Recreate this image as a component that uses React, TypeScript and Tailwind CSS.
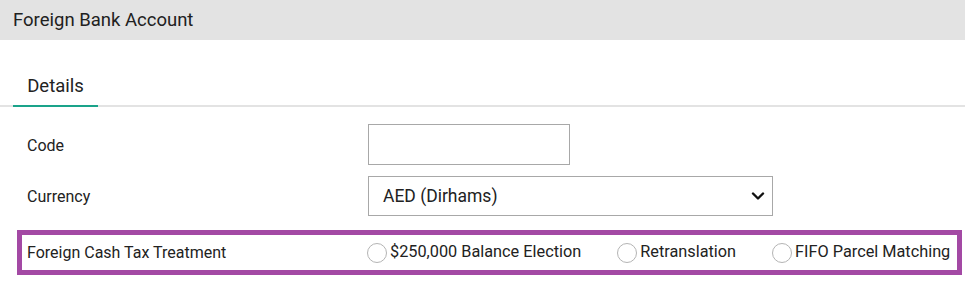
import { useState } from 'react';

const font = { fontFamily: 'Roboto, "Liberation Sans", sans-serif' };

function Radio({ label, checked, onSelect }: { label: string; checked: boolean; onSelect: () => void }) {
  return (
    <label className="flex items-center cursor-pointer" onClick={onSelect}>
      <span className="w-[20px] h-[20px] rounded-full border border-[#b4b4b4] bg-white flex items-center justify-center">
        {checked && <span className="w-[10px] h-[10px] rounded-full bg-[#1aa38a]" />}
      </span>
      <span className="ml-[3px] text-[16.3px] text-[#222]">{label}</span>
    </label>
  );
}

export default function App() {
  const [treatment, setTreatment] = useState<string | null>(null);
  const options = ['$250,000 Balance Election', 'Retranslation', 'FIFO Parcel Matching'];

  return (
    <div className="w-[965px] h-[281px] bg-white text-[#222] overflow-hidden" style={font}>
      <div className="h-[40px] bg-[#e3e3e3] flex items-center pl-[13px] pt-[2px] text-[18.5px] text-[#212121]">
        Foreign Bank Account
      </div>

      <div className="mt-[27px] pl-[13px] flex border-b-2 border-[#e3e3e3]">
        <div className="w-[85px] h-[40px] -mb-[2px] border-b-2 border-[#1aa38a] flex items-center justify-center text-[18.5px] text-[#222] pt-[2px]">
          Details
        </div>
      </div>

      <div className="pl-[17px] pr-[3px] pt-[17px]">
        <div className="grid grid-cols-[341px_1fr] items-center px-[10px]">
          <div className="text-[16px] pt-[3px]">Code</div>
          <div className="w-[202px] h-[41px] border border-[#a8a8a8] bg-white" />
        </div>

        <div className="grid grid-cols-[341px_1fr] items-center px-[10px] mt-[11px]">
          <div className="text-[16px] pt-[1px]">Currency</div>
          <div className="w-[405px] h-[40px] border border-[#a8a8a8] bg-white flex items-center justify-between pl-[14px] pr-[7px]">
            <span className="text-[17.5px] text-[#222]">AED (Dirhams)</span>
            <svg width="14" height="10" viewBox="0 0 14 10" fill="none">
              <path d="M2 2.5l5 5 5-5" stroke="#111" strokeWidth="2.4" strokeLinecap="round" strokeLinejoin="round" />
            </svg>
          </div>
        </div>

        <div className="mt-[14px] h-[45px] border-[5px] border-[#a349a4] grid grid-cols-[340px_1fr] items-center pl-[5px]">
          <div className="text-[16px]">Foreign Cash Tax Treatment</div>
          <div className="flex items-center gap-[36px]">
            {options.map(o => (
              <Radio key={o} label={o} checked={treatment === o} onSelect={() => setTreatment(o)} />
            ))}
          </div>
        </div>
      </div>
    </div>
  );
}
